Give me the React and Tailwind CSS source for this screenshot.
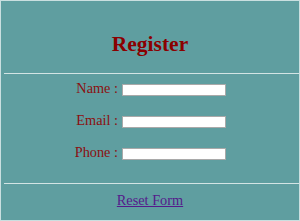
import React from 'react';

const fields = ['Name', 'Email', 'Phone'];

const App = () => {
    return (
        <div className="w-[300px] h-[221px] border border-[#cadfe0] bg-[#5f9ea0] font-['Liberation_Serif',serif]">
            {/* Heading */}
            <div className="pt-[32px] text-center text-[21.5px] leading-[22px] font-bold text-[#8b0000]">
                Register
            </div>
            <div className="mt-[18px] ml-[3px] h-px bg-[#d3e4e4]" />

            {/* Fields */}
            <div className="flex flex-col">
                {fields.map((f) => (
                    <div key={f} className="h-[32px] flex items-center">
                        <label className="w-[121px] pb-[2px] pr-[4px] text-right text-[14.3px] text-[#8b1010]">
                            {f} :
                        </label>
                        <input
                            type="text"
                            className="w-[104px] h-[12px] border border-[#a9a9a9] bg-white outline-none"
                        />
                    </div>
                ))}
            </div>

            <div className="mt-[13px] ml-[3px] h-px bg-[#d3e4e4]" />
            <div className="h-[33px] flex items-center justify-center">
                <a href="#" className="text-[14.3px] text-[#551a8b] underline">Reset Form</a>
            </div>
        </div>
    );
};

export default App;
